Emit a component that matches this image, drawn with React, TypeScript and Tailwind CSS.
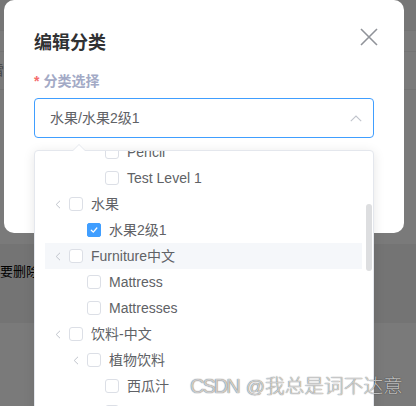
import React from "react";

type Node = { label: string; level: number; arrow?: boolean; checked?: boolean; active?: boolean };

const NODES: Node[] = [
  { label: "Pencil", level: 2 },
  { label: "Test Level 1", level: 2 },
  { label: "水果", level: 0, arrow: true },
  { label: "水果2级1", level: 1, checked: true },
  { label: "Furniture中文", level: 0, arrow: true, active: true },
  { label: "Mattress", level: 1 },
  { label: "Mattresses", level: 1 },
  { label: "饮料-中文", level: 0, arrow: true },
  { label: "植物饮料", level: 1, arrow: true },
  { label: "西瓜汁", level: 2 },
  { label: "", level: 2 },
];

const PAD = ["pl-[10px]", "pl-[28px]", "pl-[46px]"];

function Checkbox({ checked }: { checked?: boolean }) {
  if (checked) {
    return (
      <span className="flex h-[14px] w-[14px] shrink-0 items-center justify-center rounded-[2px] border border-[#409eff] bg-[#409eff]">
        <svg width="10" height="10" viewBox="0 0 10 10" fill="none">
          <path d="M2.3 5.2 4.3 7.1 7.8 3" stroke="#fff" strokeWidth="1.3" strokeLinecap="round" strokeLinejoin="round" />
        </svg>
      </span>
    );
  }
  return <span className="block h-[14px] w-[14px] shrink-0 rounded-[3px] border border-[#dcdfe6] bg-white" />;
}

function Row({ node }: { node: Node }) {
  return (
    <div
      className={`flex h-[26px] items-center text-[14px] text-[#606266] ${PAD[node.level]} ${
        node.active ? "bg-[#f5f7fa]" : ""
      }`}
    >
      <span className="flex w-[6px] shrink-0 items-center justify-center">
        {node.arrow && (
          <svg width="6" height="9" viewBox="0 0 6 9" fill="none">
            <path d="M5 .8 1.2 4.5 5 8.2" stroke="#c0c4cc" strokeWidth="1" />
          </svg>
        )}
      </span>
      <span className="ml-[8px] block">
        <Checkbox checked={node.checked} />
      </span>
      <span className="ml-[8px] whitespace-nowrap leading-none">{node.label}</span>
    </div>
  );
}

export default function App() {
  return (
    <div className="relative h-[406px] w-[416px] overflow-hidden bg-white font-['Liberation_Sans','Noto_Sans_CJK_SC',sans-serif]">
      {/* page behind the mask */}
      <div className="flex flex-col">
        <div className="h-[31px] border-b border-[#f0f0f0] bg-[#f6f6f6]" />
        <div className="h-[21px] border-b border-[#f0f0f0]" />
        <div className="flex h-[38px] items-center border-b border-[#f0f0f0] text-[13px] text-[#909399]">
          <span className="-ml-[9px]">雪</span>
        </div>
        <div className="h-[154px]" />
        <div className="flex h-[79px] items-center bg-[#f3f3f3] pb-[24px] text-[13px] text-black">
          <span>要删除吗</span>
        </div>
        <div className="h-[83px]" />
      </div>
      <div className="absolute inset-0 bg-black/[0.52]" />

      {/* dialog */}
      <div className="absolute left-[4px] top-0 h-[233px] w-[400px] rounded-[10px] bg-white pl-[30px] pr-[26px] pt-[27px]">
        <div className="flex items-start justify-between">
          <h2 className="mt-[4px] text-[18px] font-bold leading-[24px] text-[#303133]">编辑分类</h2>
          <svg className="mt-[1px]" width="18" height="18" viewBox="0 0 18 18" fill="none">
            <path d="M1 1 17 17M17 1 1 17" stroke="#909399" strokeWidth="1.6" />
          </svg>
        </div>
        <div className="mt-[16px] flex items-center text-[14px] font-bold leading-[20px]">
          <span className="mr-[4px] text-[#f56c6c]">*</span>
          <span className="text-[#a3aac6]">分类选择</span>
        </div>
        <div className="mt-[7px] flex h-[40px] w-[340px] items-center justify-between rounded-[4px] border border-[#409eff] pl-[15px] pr-[11px] text-[14px] text-[#606266]">
          <span>水果/水果2级1</span>
          <svg width="12" height="7" viewBox="0 0 12 7" fill="none">
            <path d="M.8 6.2 6 1 11.2 6.2" stroke="#c0c4cc" strokeWidth="1.1" />
          </svg>
        </div>
      </div>

      {/* dropdown popper */}
      <div className="absolute left-[34px] top-[150px] h-[270px] w-[340px] rounded-[4px] border border-[#e4e7ed] bg-white shadow-[0_2px_12px_rgba(0,0,0,0.1)]">
        <div className="absolute -top-[7px] left-[37px] h-0 w-0 border-x-[7px] border-b-[7px] border-x-transparent border-b-[#e4e7ed]" />
        <div className="absolute -top-[6px] left-[38px] h-0 w-0 border-x-[6px] border-b-[6px] border-x-transparent border-b-white" />
        <div className="h-full overflow-hidden">
          <div className="-mt-[12px] ml-[10px] mr-[11px] flex flex-col">
            {NODES.map((n, i) => (
              <Row key={i} node={n} />
            ))}
          </div>
        </div>
        <div className="absolute left-[331px] top-[53px] h-[67px] w-[6px] rounded-full bg-[#dddee0]" />
      </div>

      {/* watermark */}
      <div className="pointer-events-none absolute left-[190px] top-[371px] flex items-baseline whitespace-nowrap text-white/70 [text-shadow:0_0_1px_rgba(0,0,0,0.55),0_0_1px_rgba(0,0,0,0.35)]">
        <span className="text-[20px] font-light tracking-[-2px]">CSDN</span>
        <span className="ml-[7px] text-[19px] font-light">@</span>
        <span className="text-[19.7px] font-light">我总是词不达意</span>
      </div>
    </div>
  );
}
